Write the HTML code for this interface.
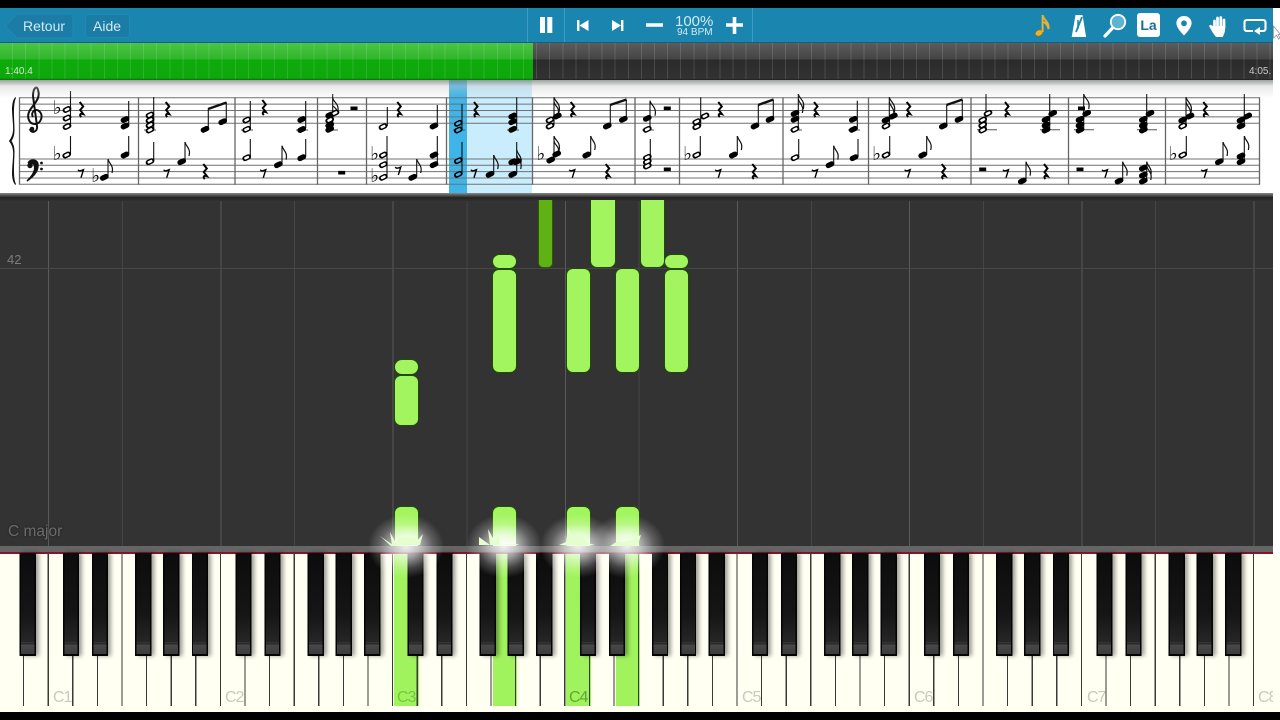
<!DOCTYPE html>
<html lang="fr">
<head>
<meta charset="utf-8">
<title>Synthesia</title>
<style>
*{margin:0;padding:0;box-sizing:border-box}
html,body{width:1280px;height:720px;overflow:hidden;background:#000;font-family:"Liberation Sans",sans-serif}
.a{position:absolute}
#page{position:relative;width:1280px;height:720px;background:#000;overflow:hidden}
#right{left:1273px;top:8px;width:7px;height:546px;background:#fff}
#bar{left:0;top:8px;width:1273px;height:35px;background:#1a86b0;border-bottom:1px solid #165f7f}
.sep{top:8px;width:1px;height:34px;background:#3c9cc2}
.t{color:#d3e8f1;white-space:nowrap;font-size:14px;line-height:16px}
#aide{left:85px;top:14px;width:45px;height:24px;background:#1b7da6;border:1px solid #2189b3;border-radius:4px}
#prog{left:0;top:43px;width:1273px;height:37px;background:linear-gradient(#5c5c5c 0,#444 44%,#2a2a2a 45%,#323232 96%,#1e1e1e 100%)}
#prog i{position:absolute;left:0;top:0;height:37px;width:533px;background:linear-gradient(#4bc544 0,#2fb52b 44%,#0eaa0a 45%,#0fa80c 94%,#0a6f12 100%)}
#ticks{left:0;top:43px;width:1273px;height:36px;background:repeating-linear-gradient(90deg,transparent 0,transparent 12.1px,rgba(255,255,255,.13) 12.1px,rgba(255,255,255,.13) 13.1px)}
.time{font-size:10px;line-height:12px;color:#cfe9cf;white-space:nowrap}
#score{left:0;top:80px;width:1273px;height:114px;background:#fff}
#hl1{left:449px;top:80px;width:18px;height:113px;background:#3fb4e8}
#hl2{left:467px;top:80px;width:65px;height:113px;background:#c9edfc}
#shade{left:0;top:80px;width:1273px;height:18px;background:linear-gradient(rgba(120,130,125,.75),rgba(200,200,200,.4) 35%,rgba(255,255,255,0))}
#roll{left:0;top:194px;width:1273px;height:359px;background:#333;overflow:hidden}
#rollshade{left:0;top:193px;width:1273px;height:8px;background:linear-gradient(#8a8a8a,#5a5a5a 25%,#222 60%,#333)}
#grid{left:-123.6px;top:200px;width:1396.6px;height:346px;background:repeating-linear-gradient(90deg,#5a5a5a 0,#5a5a5a 1px,transparent 1px,transparent 73.8px,#464646 73.8px,#464646 74.8px,transparent 74.8px,transparent 172.2px)}
#h42{left:0;top:268px;width:1273px;height:1px;background:#474747}
.n{position:absolute;background:#a3f55f;border:1px solid #1f4d05;border-radius:7px}
.d{background:#5fb114;border-color:#2c5a0a}
.b{background:linear-gradient(#a3f55f 45%,#cdfbaa 85%,#e8ffd8);border-color:#234f0c;border-bottom:0;border-radius:7px 7px 0 0}
#band{left:0;top:546px;width:1273px;height:6px;background:#656565}
#red{left:0;top:552px;width:1273px;height:2px;background:#85142a}
#keys{left:0;top:554px;width:1280px;height:158px;background:#fffff2}
.gk{position:absolute;top:554px;height:152px;background:#a0f35c}
#lines{left:23.4px;top:554px;width:1232px;height:152px;background:repeating-linear-gradient(90deg,#3a3a36 0,#3a3a36 1.2px,transparent 1.2px,transparent 24.6px)}
.clip{position:absolute;left:15px;top:553px;width:1235px;height:112px;overflow:hidden}
.bk{position:absolute;left:-138.6px;top:0;width:1450px;height:103px}
.blk{background:#040404;-webkit-mask-image:repeating-linear-gradient(90deg,transparent 0,transparent 15px,#000 15px,#000 31px,transparent 31px,transparent 44px,#000 44px,#000 60px,transparent 60px,transparent 87px,#000 87px,#000 103.4px,transparent 103.4px,transparent 115px,#000 115px,#000 131.4px,transparent 131.4px,transparent 143.6px,#000 143.6px,#000 160px,transparent 160px,transparent 172.2px)}
.inn{height:101px;background:linear-gradient(#0c0c0c 0,#151515 60%,#262626 88%,#3e3e3e 89%,#1e1e1e 90%,#484848 91%,#3c3c3c 100%);-webkit-mask-image:repeating-linear-gradient(90deg,transparent 0,transparent 16.5px,#000 16.5px,#000 29.5px,transparent 29.5px,transparent 45.5px,#000 45.5px,#000 58.5px,transparent 58.5px,transparent 88.5px,#000 88.5px,#000 102px,transparent 102px,transparent 116.5px,#000 116.5px,#000 130px,transparent 130px,transparent 145px,#000 145px,#000 158.5px,transparent 158.5px,transparent 172.2px)}
#shw{filter:blur(2px);opacity:.38;left:15px;top:553px;width:1240px;height:106px;position:absolute;overflow:hidden}
.shk{left:-136px}
.glow{position:absolute;top:514px;width:76px;height:64px;background:radial-gradient(closest-side,rgba(255,255,255,.9) 0,rgba(255,255,255,.62) 35%,rgba(255,255,255,.22) 70%,rgba(255,255,255,0) 100%)}
.lb{position:absolute;top:688px;font-size:16px;line-height:20px;letter-spacing:-1px;color:#c9c9bd;white-space:nowrap}
svg{position:absolute;left:0;top:0}
</style>
</head>
<body>
<div id="page">
<div class="a" id="right"></div>

<div class="a" id="bar"></div>
<div class="a sep" style="left:527px"></div>
<div class="a sep" style="left:564px"></div>
<div class="a sep" style="left:752px"></div>
<div class="a" id="aide"></div>
<svg width="1280" height="44" viewBox="0 0 1280 44">
<path d="M5.5 26 17 14H70q3 0 3 3V35q0 3-3 3H17Z" fill="#1b7da6" stroke="#2189b3"/>
<path d="M540 17h5v16h-5zM547.3 17h5v16h-5z" fill="#fff"/>
<path d="M577 20h2.4v11H577zM588.5 20v11l-9-5.5z" fill="#fff"/>
<path d="M612 20v11l9-5.5zM621 20h2.4v11H621z" fill="#fff"/>
<path d="M646 23.2h17v3.6h-17zM726 23.2h17v3.6h-17zM732.7 17h3.6v17h-3.6z" fill="#fff"/>
<ellipse cx="1039" cy="33" rx="4" ry="3" fill="#e8b234" stroke="#8a6a1c" stroke-width=".7" transform="rotate(-25 1039 33)"/>
<path d="M1042.6 32V15c1 5 7 7 6 14-1-4-3-6-5-7" fill="none" stroke="#e8b234" stroke-width="1.9"/>
<path d="M1075.5 15h7l3.6 22h-14.4z" fill="#fff"/>
<path d="M1076 32l6-15" stroke="#1a86b0" stroke-width="1.8"/>
<path d="M1078 20v9" stroke="#1a86b0" stroke-width="1.5"/>
<circle cx="1118" cy="22" r="7.2" fill="#5fb3d3" stroke="#fff" stroke-width="1.8"/>
<path d="M1112.5 28 1105 36" stroke="#fff" stroke-width="3.2" stroke-linecap="round"/>
<rect x="1137" y="13" width="23" height="24" rx="3" fill="#fff"/>
<path fill-rule="evenodd" d="M1184 16c-4.6 0-7.6 3.2-7.6 7.2 0 4.4 5 9.400 7.600 12.300 2.600-2.900 7.600-7.900 7.600-12.300 0-4-3-7.200-7.600-7.200zm0 4.400a2.900 2.900 0 1 1 0 5.800 2.900 2.900 0 1 1 0-5.800z" fill="#fff"/>
<path d="M1214.500 28V21M1217.500 26V18M1220.800 26V17.500M1224 27V20" stroke="#fff" stroke-width="2.700" stroke-linecap="round"/>
<path d="M1213.200 26h12.200l-.6 6-2 5h-6.800l-3-4-3.700-6.500c-.4-1.400 1.200-2.200 2.200-1.200z" fill="#fff"/>
<path d="M1253 31h-6q-2.500 0-2.500-2.500v-6q0-2.500 2.500-2.500h16q2.500 0 2.500 2.500v6q0 2.500-2.500 2.500h-4" fill="none" stroke="#fff" stroke-width="2.100"/>
<path d="M1260 27v8l-6-4z" fill="#fff"/>
<path d="M1273.500 26v12l3-2.800 2 4 1.500-.8-2-3.900h2.500z" fill="#fff" stroke="#888" stroke-width=".7"/>
</svg>
<div class="a t" style="left:23px;top:18px">Retour</div>
<div class="a t" style="left:93px;top:18px">Aide</div>
<div class="a t" style="left:675px;top:14px;font-size:15px">100%</div>
<div class="a t" style="left:677px;top:27px;font-size:10px;line-height:12px">94 BPM</div>
<div class="a" style="left:1137px;top:17px;width:23px;text-align:center;font-size:14px;line-height:17px;color:#1b6f94;font-weight:bold">La</div>

<div class="a" id="prog"><i></i></div>
<div class="a" id="ticks"></div>
<div class="a time" style="left:5px;top:66px">1:40.4</div>
<div class="a time" style="left:1249px;top:66px;width:23px;overflow:hidden;color:#c9c9c9">4:05.1</div>

<div class="a" id="score"></div>
<div class="a" id="hl1"></div>
<div class="a" id="hl2"></div>

<svg width="1280" height="200" viewBox="0 0 1280 200" style="filter:blur(.3px)">
<path fill="none" stroke="#707070" d="M20 97.700H1259.500M20 104.100H1259.500M20 110.500H1259.500M20 116.900H1259.500M20 123.300H1259.500M20 159H1259.500M20 165.300H1259.500M20 171.600H1259.500M20 178H1259.500M20 184.300H1259.500"/>
<path fill="none" stroke="#666" stroke-width="1.300" d="M19.500 97.200V184.800M138.500 97.200V184.800M235 97.200V184.800M317.500 97.200V184.800M366.500 97.200V184.800M446.500 97.200V184.800M532.500 97.200V184.800M635 97.200V184.800M679.500 97.200V184.800M783 97.200V184.800M868.500 97.200V184.800M971 97.200V184.800M1068.500 97.200V184.800M1165.500 97.200V184.800M1259.500 97.200V184.800"/>
<path fill="none" stroke="#555" d="M144 130h12M241 130h12M296 130h12M326 130h12M453 130h12M507 130h12M642 130h12M790 130h12M848 130h12M977 129.700h20M1040 129.700h20M1074 129.700h20M1137 129.700h20"/>
<path d="M15.600 97.500C9.500 104 14.500 122 13.500 131c-.4 4-2 7.500-4 10 2 2.500 3.600 6 4 10 1 9-4 27 2.100 33.500-3.600-7-1.600-24-1.600-33 0-4-1-7.500-3-10.500 2-3 3-6.500 3-10.500 0-9-2-26 1.600-33z" fill="#111" stroke="#111" stroke-width="1"/>
<path d="M33 117C30 112 36 108 39 111 44 115 41 124 35 124 29 124 26 117 30 110 34 104 41 98 38 90 37 85 33 88 33 96L37 126C38 132 31 134 30 129" fill="none" stroke="#111" stroke-width="2"/>
<circle cx="32" cy="129" r="2.300" fill="#111"/>
<path d="M28 163c2-4 9-4 10 1 .8 7-5 13-11 17 4-4 8.500-9 7.500-15-.8-3.500-4-3.500-5-1" fill="#111" stroke="#111" stroke-width="1.400"/>
<circle cx="30" cy="165.500" r="2.700" fill="#111"/>
<circle cx="41.500" cy="163" r="1.400" fill="#111"/><circle cx="41.500" cy="169" r="1.400" fill="#111"/>

<path fill="none" stroke="#111" stroke-width="1.100" d="M70.500 91V126M128.700 101V126M153.700 97V129M208.300 129V109M226.300 121V102.500M250.300 101V128M305.700 101V128M332.700 94V128M387.300 107V126M437.300 105V126M70.500 136V154M108 159V177M128.700 136V154M153.700 142V161M185 142V161M250.300 139V157M282 145.700V164M305.700 139V157M387 136V176M416.700 159V177M437.300 136V164M462 104V129M516.700 97.300V129M462 142V174M493.700 155V174M516.700 142V174M554 97.300V125M610.300 105V126M626.300 100V119M554 136V160M590.700 136V155M650 100.700V129M650.300 139V165M700.700 97.300V126M758.300 105V126M773.300 100V119M700.300 136V155M737.300 136V155M798.300 94V129M857.300 100.700V129M798.700 139V157M833.700 145.700V164M858 139V157M889.300 97.300V125M946.700 105V126M962.300 100V119M889.700 136V155M926.700 136V155M986 94V130M1049.700 94V130M1026 161.700V181M1083.700 94V130M1146.700 94V130M1122.700 161.700V181M1146.700 161.700V181M1186 97.300V125M1244.300 94V126M1186.300 136V155M1223 142V161M1244.300 136V161"/>
<path fill="none" stroke="#111" stroke-width="2.400" d="M208 109 226.600 102.500M610 105 626.600 99.500M758 105 773.600 99.500M946.400 105 962.600 99.500"/>
<path fill="none" stroke="#111" stroke-width="1.200" d="M332.700 98c1 5 7 5 5 15-1-4-3-6-5-7M108 159c1 5 6 6 4 14M185 142c1 5 6 6 4 14M282 145.700c1 5 6 6 4 14M416.700 159c1 5 6 6 4 14M493.700 155c1 5 6 6 4 14M516.700 150c1 5 6 6 4 14M516.700 155c1 5 6 6 4 14M554 97.300c1 5 7 5 5 15M554 102c1 5 6 5 4 12M554 136c1 5 7 5 5 15M554 141c1 5 6 5 4 12M590.700 136c1 5 6 6 4 14M650 100.700c1 5 7 6 5 15M737.300 136c1 5 6 6 4 14M798.300 94c1 5 7 6 5 15M798.300 99c1 5 6 6 4 14M833.700 145.700c1 5 6 6 4 14M889.300 97.300c1 5 7 6 5 15M889.300 102c1 5 6 6 4 14M926.700 136c1 5 6 6 4 14M1026 161.700c1 5 6 6 4 14M1083.700 94c1 5 7 6 5 15M1122.700 161.700c1 5 6 6 4 14M1146.700 161.700c1 5 6 6 4 14M1146.700 166c1 5 6 6 4 14M1186 97.300c1 5 7 6 5 15M1186 102c1 5 6 6 4 14M1223 142c1 5 6 6 4 14M1244.300 136c1 5 6 6 4 14"/>

<path fill="none" stroke="#000" stroke-width="5.300" stroke-linecap="round" d="M67 109.500m-1.700.8l3.400-1.600M67 118m-1.700.8l3.400-1.600M67 126.500m-1.700.8l3.400-1.600M150 115m-1.700.8l3.400-1.600M150 120m-1.700.8l3.400-1.600M150 125m-1.700.8l3.400-1.600M150 130m-1.700.8l3.400-1.600M246.700 120m-1.700.8l3.400-1.600M246.700 129.300m-1.700.8l3.400-1.600M329.700 115m-1.700.8l3.400-1.600M329.700 120m-1.700.8l3.400-1.600M329.700 125m-1.700.8l3.400-1.600M335 113m-1.700.8l3.400-1.600M383 126.700m-1.700.8l3.400-1.600M66.700 155m-1.700.8l3.400-1.600M150 161.700m-1.700.8l3.400-1.600M246.700 157.700m-1.700.8l3.400-1.600M383.300 155m-1.700.8l3.400-1.600M383.300 164.700m-1.700.8l3.400-1.600M383.300 177.300m-1.700.8l3.400-1.600M458.300 123.300m-1.700.8l3.400-1.600M458.300 130m-1.700.8l3.400-1.600M458.300 160.700m-1.700.8l3.400-1.600M458.300 174.300m-1.700.8l3.400-1.600M550 120m-1.700.8l3.400-1.600M550 126m-1.700.8l3.400-1.600M647.300 129.300m-1.700.8l3.400-1.600M647.300 157.300m-1.700.8l3.400-1.600M647.300 161.700m-1.700.8l3.400-1.600M647.300 166m-1.700.8l3.400-1.600M696.700 121.700m-1.700.8l3.400-1.600M696.700 126.700m-1.700.8l3.400-1.600M705 116m-1.700.8l3.400-1.600M696.700 155m-1.700.8l3.400-1.600M795 129.300m-1.700.8l3.400-1.600M795 157.700m-1.700.8l3.400-1.600M886 126m-1.700.8l3.400-1.600M886 155m-1.700.8l3.400-1.600M982.700 130m-1.700.8l3.400-1.600M982.700 125m-1.700.8l3.400-1.600M982.700 120m-1.700.8l3.400-1.600M988 113.300m-1.700.8l3.400-1.600M1182.700 126m-1.700.8l3.400-1.600M1182.700 155m-1.700.8l3.400-1.600"/>
<path fill="none" stroke="#fff" stroke-width="2.500" stroke-linecap="round" d="M67 109.500m-1.200.6l2.400-1.200M67 118m-1.200.6l2.400-1.200M67 126.500m-1.200.6l2.400-1.200M150 115m-1.200.6l2.400-1.200M150 120m-1.200.6l2.400-1.200M150 125m-1.200.6l2.400-1.200M150 130m-1.200.6l2.400-1.200M246.700 120m-1.200.6l2.400-1.200M246.700 129.300m-1.200.6l2.400-1.200M329.700 120m-1.200.6l2.400-1.200M335 113m-1.200.6l2.400-1.200M383 126.700m-1.200.6l2.400-1.200M66.700 155m-1.200.6l2.400-1.200M150 161.700m-1.200.6l2.400-1.200M246.700 157.700m-1.200.6l2.400-1.200M383.300 155m-1.200.6l2.400-1.200M383.300 164.700m-1.200.6l2.400-1.200M383.300 177.300m-1.200.6l2.400-1.200M550 120m-1.200.6l2.400-1.200M550 126m-1.200.6l2.400-1.200M647.300 129.300m-1.200.6l2.400-1.200M647.300 157.300m-1.200.6l2.400-1.200M647.300 161.700m-1.200.6l2.400-1.200M647.300 166m-1.200.6l2.400-1.200M696.700 121.700m-1.200.6l2.400-1.200M696.700 126.700m-1.200.6l2.400-1.200M705 116m-1.200.6l2.400-1.200M696.700 155m-1.200.6l2.400-1.200M795 129.300m-1.200.6l2.400-1.200M795 157.700m-1.200.6l2.400-1.200M886 126m-1.200.6l2.400-1.200M886 155m-1.200.6l2.400-1.200M982.700 130m-1.200.6l2.400-1.200M982.700 125m-1.200.6l2.400-1.200M982.700 120m-1.200.6l2.400-1.200M988 113.300m-1.200.6l2.400-1.200M1182.700 126m-1.200.6l2.400-1.200M1182.700 155m-1.200.6l2.400-1.200"/>
<path fill="none" stroke="#3fb4e8" stroke-width="2.500" stroke-linecap="round" d="M458.300 123.300m-1.200.6l2.400-1.200M458.300 130m-1.200.6l2.400-1.200M458.300 160.700m-1.200.6l2.400-1.200M458.300 174.300m-1.200.6l2.400-1.200"/>
<path fill="none" stroke="#000" stroke-width="5.300" stroke-linecap="round" d="M125 119.500m-1.700.8l3.400-1.600M125 126m-1.700.8l3.400-1.600M205 129.300m-1.700.8l3.400-1.600M222.700 121.700m-1.700.8l3.400-1.600M301.700 119.500m-1.700.8l3.400-1.600M301.700 129.500m-1.700.8l3.400-1.600M329.700 129.300m-1.700.8l3.400-1.600M434 126m-1.700.8l3.400-1.600M104.300 177.300m-1.700.8l3.400-1.600M125 155m-1.700.8l3.400-1.600M181.700 161.700m-1.700.8l3.400-1.600M278.300 164.700m-1.700.8l3.400-1.600M301.700 157.700m-1.700.8l3.400-1.600M412.700 177.300m-1.700.8l3.400-1.600M434 155m-1.700.8l3.400-1.600M434 164.700m-1.700.8l3.400-1.600M512.700 116m-1.700.8l3.400-1.600M512.700 121.700m-1.700.8l3.400-1.600M512.700 129.300m-1.700.8l3.400-1.600M490 174.300m-1.700.8l3.400-1.600M512.700 161.700m-1.700.8l3.400-1.600M512.700 174.300m-1.700.8l3.400-1.600M517 161.700m-1.700.8l3.400-1.600M557.300 116m-1.700.8l3.400-1.600M607.300 126m-1.700.8l3.400-1.600M623.300 119.300m-1.700.8l3.400-1.600M550.700 160m-1.700.8l3.400-1.600M556.700 154m-1.700.8l3.400-1.600M586.700 155m-1.700.8l3.400-1.600M647.300 118.300m-1.700.8l3.400-1.600M755 126m-1.700.8l3.400-1.600M770 119.300m-1.700.8l3.400-1.600M733.300 155m-1.700.8l3.400-1.600M795 113.300m-1.700.8l3.400-1.600M795 119.300m-1.700.8l3.400-1.600M853.300 119.300m-1.700.8l3.400-1.600M853.300 129.300m-1.700.8l3.400-1.600M830 164.700m-1.700.8l3.400-1.600M854 157.700m-1.700.8l3.400-1.600M886 120m-1.700.8l3.400-1.600M893.300 116m-1.700.8l3.400-1.600M943.300 126m-1.700.8l3.400-1.600M959 119.300m-1.700.8l3.400-1.600M922.700 155m-1.700.8l3.400-1.600M1046 130m-1.700.8l3.400-1.600M1046 125m-1.700.8l3.400-1.600M1046 119.300m-1.700.8l3.400-1.600M1052.700 113.300m-1.700.8l3.400-1.600M1022.300 181m-1.700.8l3.400-1.600M1080 130m-1.700.8l3.400-1.600M1080 125m-1.700.8l3.400-1.600M1080 119.300m-1.700.8l3.400-1.600M1086.700 113.300m-1.700.8l3.400-1.600M1143.300 130m-1.700.8l3.400-1.600M1143.300 125m-1.700.8l3.400-1.600M1143.300 119.300m-1.700.8l3.400-1.600M1150 113.300m-1.700.8l3.400-1.600M1119 181m-1.700.8l3.400-1.600M1143.300 175m-1.700.8l3.400-1.600M1143.300 181m-1.700.8l3.400-1.600M1143.300 168m-1.700.8l3.400-1.600M1182.700 120m-1.700.8l3.400-1.600M1190 116m-1.700.8l3.400-1.600M1241 126m-1.700.8l3.400-1.600M1241 120m-1.700.8l3.400-1.600M1247.700 116m-1.700.8l3.400-1.600M1219.300 161.700m-1.700.8l3.400-1.600M1241 161.700m-1.700.8l3.400-1.600M1241 156m-1.700.8l3.400-1.600"/>

<path fill="none" stroke="#000" stroke-width="2" d="M79.700 102l3.500 4.500-3 3.500 3 4c-3-1-4 1-2 3M165.700 102l3.500 4.500-3 3.500 3 4c-3-1-4 1-2 3M262.300 100l3.500 4.500-3 3.500 3 4c-3-1-4 1-2 3M397.300 102l3.500 4.500-3 3.500 3 4c-3-1-4 1-2 3M474 102l3.500 4.500-3 3.500 3 4c-3-1-4 1-2 3M570.700 102l3.500 4.500-3 3.500 3 4c-3-1-4 1-2 3M718.300 102l3.500 4.500-3 3.500 3 4c-3-1-4 1-2 3M814 102l3.500 4.500-3 3.500 3 4c-3-1-4 1-2 3M906.700 102l3.500 4.500-3 3.500 3 4c-3-1-4 1-2 3M1005 102l3.500 4.500-3 3.500 3 4c-3-1-4 1-2 3M1203.300 102l3.500 4.500-3 3.500 3 4c-3-1-4 1-2 3M203.300 164l3.500 4.500-3 3.500 3 4c-3-1-4 1-2 3M605.700 164l3.500 4.500-3 3.500 3 4c-3-1-4 1-2 3M752.300 164l3.500 4.500-3 3.500 3 4c-3-1-4 1-2 3M941.700 164l3.500 4.500-3 3.500 3 4c-3-1-4 1-2 3M1044 164l3.500 4.500-3 3.500 3 4c-3-1-4 1-2 3"/>
<path fill="none" stroke="#000" stroke-width="1.400" d="M78 169.700c1 2 3 1 5.500 0l-2.500 8M163.700 169.700c1 2 3 1 5.500 0l-2.500 8M260.300 169.700c1 2 3 1 5.500 0l-2.500 8M395.300 167c1 2 3 1 5.500 0l-2.500 8M471 169.700c1 2 3 1 5.500 0l-2.500 8M569.300 169.700c1 2 3 1 5.500 0l-2.500 8M715.300 169.700c1 2 3 1 5.500 0l-2.500 8M812 169.700c1 2 3 1 5.500 0l-2.500 8M904.700 169.700c1 2 3 1 5.500 0l-2.500 8M1003 169.700c1 2 3 1 5.500 0l-2.500 8M1102 169.700c1 2 3 1 5.500 0l-2.500 8M1201.300 169.700c1 2 3 1 5.500 0l-2.500 8"/>
<path fill="none" stroke="#000" stroke-width="3.600" d="M350.500 108.300h7M338.200 172.700h7M663.800 108.300h7M663.800 169.300h7M979.200 169.300h7M1076.500 169.300h7M1078 108.300h7"/>
<g font-family="'DejaVu Sans',sans-serif" font-size="19" text-anchor="middle" fill="#111">
<text x="57.300" y="114">♭</text><text x="57.300" y="160">♭</text><text x="95.700" y="182">♭</text><text x="374.700" y="160">♭</text><text x="374.700" y="182">♭</text><text x="541" y="160">♭</text><text x="687.700" y="160">♭</text><text x="876.700" y="160">♭</text><text x="1173.300" y="160">♭</text>
</g>
</svg>
<div class="a" id="shade"></div>

<div class="a" id="roll"></div>
<div class="a" id="grid"></div>
<div class="a" id="h42"></div>
<div class="a" id="rollshade"></div>
<div class="a" style="left:7px;top:252px;font-size:13px;line-height:16px;color:#7c7c7c">42</div>
<div class="a" style="left:8px;top:523px;font-size:15.500px;line-height:18px;color:#6c6c6c;text-shadow:0 0 2px #1c1c1c">C major</div>

<div class="n d" style="left:538px;top:200px;width:15px;height:68px;border-top:0;border-radius:0 0 5px 5px"></div>
<div class="n" style="left:590px;top:200px;width:25.500px;height:68px;border-top:0;border-radius:0 0 7px 7px"></div>
<div class="n" style="left:640px;top:200px;width:25px;height:68px;border-top:0;border-radius:0 0 7px 7px"></div>
<div class="n" style="left:492px;top:254px;width:25px;height:15px;border-radius:8px"></div>
<div class="n" style="left:492px;top:269px;width:25px;height:104px"></div>
<div class="n" style="left:566px;top:268px;width:25px;height:105px"></div>
<div class="n" style="left:615px;top:268px;width:25px;height:105px"></div>
<div class="n" style="left:664px;top:254px;width:25px;height:15px;border-radius:8px"></div>
<div class="n" style="left:664px;top:269px;width:25px;height:104px"></div>
<div class="n" style="left:394px;top:359px;width:25px;height:16px;border-radius:8px"></div>
<div class="n" style="left:394px;top:375px;width:25px;height:51px"></div>
<div class="n b" style="left:393.500px;top:506px;width:25px;height:40px"></div>
<div class="n b" style="left:492px;top:506px;width:25px;height:40px"></div>
<div class="n b" style="left:566px;top:506px;width:25px;height:40px"></div>
<div class="n b" style="left:615px;top:506px;width:25px;height:40px"></div>

<div class="a" id="band"></div>
<div class="a" id="red"></div>
<div class="a" id="keys"></div>
<div class="gk" style="left:394px;width:24.500px"></div>
<div class="gk" style="left:492.500px;width:24.500px"></div>
<div class="gk" style="left:566px;width:24.500px"></div>
<div class="gk" style="left:615.500px;width:24.500px"></div>
<div class="a" id="lines"></div>
<div class="lb" style="left:53px">C1</div>
<div class="lb" style="left:225px">C2</div>
<div class="lb" style="left:397px;color:#78c544">C3</div>
<div class="lb" style="left:569px;color:#60a838">C4</div>
<div class="lb" style="left:742px">C5</div>
<div class="lb" style="left:914px">C6</div>
<div class="lb" style="left:1087px">C7</div>
<div class="a" style="left:1258px;top:688px;width:15px;height:20px;overflow:hidden"><div class="lb" style="left:0;top:0">C8</div></div>

<div id="shw"><div class="bk blk shk"></div></div>
<div class="clip"><div class="bk blk"></div><div class="bk inn"></div></div>

<div class="glow" style="left:368px"></div>
<div class="glow" style="left:466px"></div>
<div class="glow" style="left:540px"></div>
<div class="glow" style="left:589px"></div>
<svg width="1280" height="720" viewBox="0 0 1280 720">
<path fill="#e6fdd0" d="M380 536l13 9h-1l-2-13 6 11 3-6 15 1 3 3 6-7-3 11h1l-30 1zM479 537l11 8-2-16 7 13 3-9 2 12 17-1 2 1h-40zM559 545l7-3 2-14 5 9 5-4 6 5 4 5 7 2-14 1zM610 546l8-5-2 0 6 1 10-2 2-2 7-3-3 10 2 1z"/>
</svg>
</div>
</body>
</html>
